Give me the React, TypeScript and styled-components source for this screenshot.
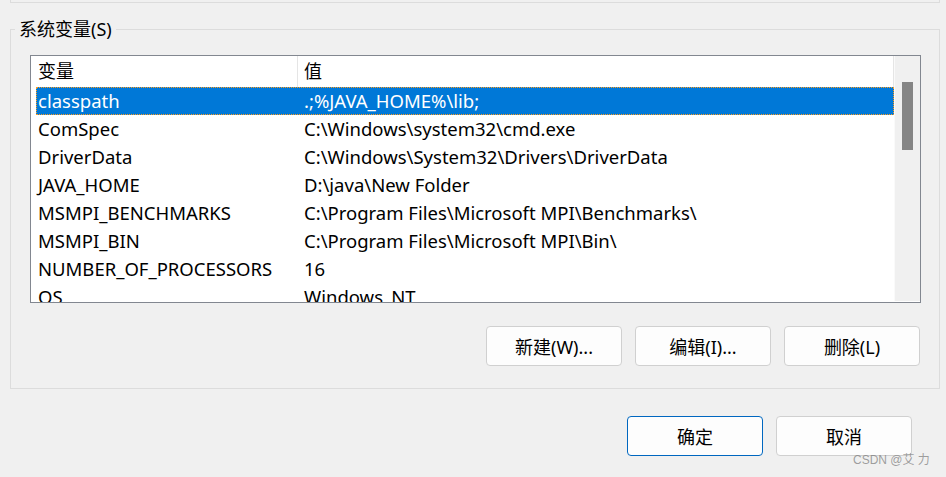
import React from "react";
import styled, { createGlobalStyle } from "styled-components";

const Global = createGlobalStyle`
  html, body { margin: 0; padding: 0; background: #f0f0f0; }
  body { font-family: "Noto Sans", "Noto Sans CJK SC", sans-serif; }
`;

const UI = `"Noto Sans", "Noto Sans CJK SC", sans-serif`;

const Window = styled.div`
  position: relative;
  width: 946px;
  height: 477px;
  background: #f0f0f0;
  display: flex;
  flex-direction: column;
  overflow: hidden;
  font-family: ${UI};
  color: #000;
`;

const PrevGroup = styled.div`
  margin-left: 10px;
  width: 930px;
  height: 3px;
  box-sizing: border-box;
  border: 1px solid #dcdcdc;
  border-top: none;
`;

const Group = styled.div`
  position: relative;
  margin: 26px 0 0 10px;
  width: 930px;
  height: 360px;
  box-sizing: border-box;
  border: 1px solid #dcdcdc;
  padding: 25px 18px 22px 19px;
  display: flex;
  flex-direction: column;
`;

const Legend = styled.div`
  position: absolute;
  left: 4px;
  top: -13px;
  padding: 0 4px;
  background: #f0f0f0;
  font-size: 18px;
  line-height: 24px;
  font-family: ${UI};
`;

const ListBox = styled.div`
  width: 891px;
  height: 248px;
  box-sizing: border-box;
  border: 1px solid #828790;
  background: #fff;
  display: flex;
  overflow: hidden;
`;

const ListBody = styled.div`
  flex: 1;
  display: flex;
  flex-direction: column;
  overflow: hidden;
`;

const HeaderRow = styled.div`
  display: grid;
  grid-template-columns: 262px 1fr;
  height: 31px;
  padding-left: 5px;
  border-right: 1px solid #e5e5e5;
  flex-shrink: 0;
`;

const HeaderCell = styled.div<{ $divider?: boolean }>`
  padding-left: ${(p) => (p.$divider ? "2px" : "6px")};
  font-size: 18px;
  line-height: 31px;
  border-right: ${(p) => (p.$divider ? "1px solid #e5e5e5" : "none")};
  white-space: nowrap;
`;

const Row = styled.div<{ $selected?: boolean }>`
  display: grid;
  grid-template-columns: 262px 1fr;
  height: 28px;
  margin-left: 5px;
  flex-shrink: 0;
  box-sizing: border-box;
  background: ${(p) => (p.$selected ? "#0078d7" : "transparent")};
  color: ${(p) => (p.$selected ? "#fff" : "#000")};
  outline: ${(p) => (p.$selected ? "1px dotted #ff9d1c" : "none")};
  outline-offset: -1px;
`;

const Cell = styled.div<{ $first?: boolean }>`
  padding-left: ${(p) => (p.$first ? "2px" : "6px")};
  font-size: 18.5px;
  line-height: 28px;
  white-space: nowrap;
  overflow: hidden;
`;

const ScrollTrack = styled.div`
  width: 26px;
  margin: 0 0 1px 0;
  background: #f0f0f0;
  border-left: 1px solid #fafafa;
  display: flex;
  justify-content: center;
  padding-top: 26px;
  box-sizing: border-box;
`;

const Thumb = styled.div`
  width: 11px;
  height: 68px;
  background: #858585;
`;

const ButtonRow = styled.div`
  display: flex;
  justify-content: flex-end;
  gap: 13px;
  margin-top: 23px;
  padding-right: 1px;
`;

const Button = styled.button<{ $primary?: boolean }>`
  width: 136px;
  height: 40px;
  box-sizing: border-box;
  border: 1px solid ${(p) => (p.$primary ? "#0067c0" : "#d0d0d0")};
  border-radius: 4px;
  background: #fdfdfd;
  font-family: ${UI};
  font-size: 18px;
  color: #000;
  padding: 0;
`;

const Footer = styled.div`
  display: flex;
  justify-content: flex-end;
  gap: 13px;
  margin-top: 27px;
  padding-right: 34px;
`;

const Watermark = styled.div`
  position: absolute;
  left: 853px;
  top: 451px;
  font-family: "Liberation Sans", "Noto Sans CJK SC", sans-serif;
  font-size: 12px;
  line-height: 18px;
  color: rgba(120, 120, 120, 0.7);
  white-space: nowrap;
`;

const vars: [string, string][] = [
  ["classpath", ".;%JAVA_HOME%\\lib;"],
  ["ComSpec", "C:\\Windows\\system32\\cmd.exe"],
  ["DriverData", "C:\\Windows\\System32\\Drivers\\DriverData"],
  ["JAVA_HOME", "D:\\java\\New Folder"],
  ["MSMPI_BENCHMARKS", "C:\\Program Files\\Microsoft MPI\\Benchmarks\\"],
  ["MSMPI_BIN", "C:\\Program Files\\Microsoft MPI\\Bin\\"],
  ["NUMBER_OF_PROCESSORS", "16"],
  ["OS", "Windows_NT"],
];

export default function App() {
  return (
    <Window>
      <Global />
      <PrevGroup />
      <Group>
        <Legend>系统变量(S)</Legend>
        <ListBox>
          <ListBody>
            <HeaderRow>
              <HeaderCell $divider>变量</HeaderCell>
              <HeaderCell>值</HeaderCell>
            </HeaderRow>
            {vars.map(([k, v], i) => (
              <Row key={k} $selected={i === 0}>
                <Cell $first>{k}</Cell>
                <Cell>{v}</Cell>
              </Row>
            ))}
          </ListBody>
          <ScrollTrack>
            <Thumb />
          </ScrollTrack>
        </ListBox>
        <ButtonRow>
          <Button>新建(W)...</Button>
          <Button>编辑(I)...</Button>
          <Button>删除(L)</Button>
        </ButtonRow>
      </Group>
      <Footer>
        <Button $primary>确定</Button>
        <Button>取消</Button>
      </Footer>
      <Watermark>CSDN @艾 力</Watermark>
    </Window>
  );
}
